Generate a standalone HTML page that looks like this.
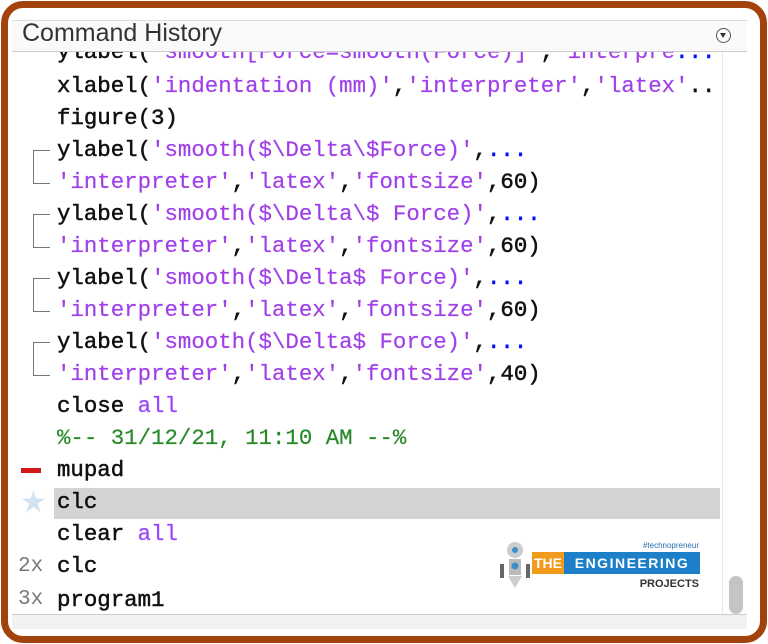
<!DOCTYPE html><html><head><style>
body{margin:0;width:768px;height:644px;background:#fff;overflow:hidden;font-family:"Liberation Sans",sans-serif}
.frame{position:absolute;left:1px;top:1px;width:752px;height:628px;border:7px solid #a2420c;border-radius:22px;background:#fff}
.hdr{position:absolute;left:12px;top:20px;width:735px;height:30px;border-top:1px solid #ddd;background:#fafafa;border-bottom:1px solid #ccc}
.hdr span{position:absolute;left:10px;top:-2px;font-size:25px;color:#333}
.dd{position:absolute;right:16px;top:7px;width:15px;height:15px;border:1.5px solid #555;border-radius:50%;box-sizing:border-box}
.dd:after{content:"";position:absolute;left:3px;top:4px;border-left:3.5px solid transparent;border-right:3.5px solid transparent;border-top:5px solid #333}
.l{position:absolute;left:57px;font-family:"Liberation Mono",monospace;font-size:22.4px;line-height:32px;height:32px;white-space:pre;color:#111;-webkit-text-stroke:0.5px #111}
.s{color:#a040e8;-webkit-text-stroke:0.2px #a040e8}.k{color:#9a40ff;-webkit-text-stroke:0.2px #9a40ff}.e{color:#0010ff;-webkit-text-stroke:0.5px #0010ff}.c{color:#2a8a2a;-webkit-text-stroke:0.2px #2a8a2a}
.br{position:absolute;left:33px;width:16px;height:32px;border:1.5px solid #777;border-right:none}
.cnt{position:absolute;left:18px;font-family:"Liberation Mono",monospace;font-size:21px;color:#777;line-height:32px}
.sel{position:absolute;left:54px;top:488px;width:666px;height:31px;background:#d3d3d3}
.sb{position:absolute;left:729px;top:576px;width:14px;height:38px;background:#c4c4c4;border-radius:7px}
.st{position:absolute;left:12px;top:614px;width:735px;height:14px;background:#f2f2f4;border-top:1px solid #ccc}
.vl{position:absolute;left:722px;top:51px;width:1px;height:563px;background:#e6e6e6}
</style></head><body>
<div class="frame"></div>
<div class="vl"></div>
<div class="sel"></div>
<div style="position:absolute;left:12px;top:51px;width:710px;height:563px;overflow:hidden">
<div class="l" style="left:45px;top:-15px">ylabel(<span class="s">'smooth[Force=smooth(Force)]'</span>,<span class="s">'interpre</span><span class="e">...</span></div>
</div>
<div class="hdr"><span>Command History</span><div class="dd"></div></div>
<div class="l" style="top:70px">xlabel(<span class="s">'indentation (mm)'</span>,<span class="s">'interpreter'</span>,<span class="s">'latex'</span>..</div>
<div class="l" style="top:102px">figure(3)</div>
<div class="br" style="top:150px"></div>
<div class="l" style="top:134px">ylabel(<span class="s">'smooth($\Delta\$Force)'</span>,<span class="e">...</span></div>
<div class="l" style="top:166px"><span class="s">'interpreter'</span>,<span class="s">'latex'</span>,<span class="s">'fontsize'</span>,60)</div>
<div class="br" style="top:214px"></div>
<div class="l" style="top:198px">ylabel(<span class="s">'smooth($\Delta\$ Force)'</span>,<span class="e">...</span></div>
<div class="l" style="top:230px"><span class="s">'interpreter'</span>,<span class="s">'latex'</span>,<span class="s">'fontsize'</span>,60)</div>
<div class="br" style="top:278px"></div>
<div class="l" style="top:262px">ylabel(<span class="s">'smooth($\Delta$ Force)'</span>,<span class="e">...</span></div>
<div class="l" style="top:294px"><span class="s">'interpreter'</span>,<span class="s">'latex'</span>,<span class="s">'fontsize'</span>,60)</div>
<div class="br" style="top:342px"></div>
<div class="l" style="top:326px">ylabel(<span class="s">'smooth($\Delta$ Force)'</span>,<span class="e">...</span></div>
<div class="l" style="top:358px"><span class="s">'interpreter'</span>,<span class="s">'latex'</span>,<span class="s">'fontsize'</span>,40)</div>
<div class="l" style="top:390px">close <span class="k">all</span></div>
<div class="l" style="top:422px"><span class="c">%-- 31/12/21, 11:10 AM --%</span></div>
<div style="position:absolute;left:21px;top:468px;width:20px;height:5px;background:#d01818"></div>
<div class="l" style="top:454px">mupad</div>
<div style="position:absolute;left:20px;top:486px;font-size:30px;color:#cfe3f2;line-height:34px">★</div>
<div class="l" style="top:486px">clc</div>
<div class="l" style="top:518px">clear <span class="k">all</span></div>
<div class="cnt" style="top:551px">2x</div>
<div class="l" style="top:550px">clc</div>
<div class="cnt" style="top:584px">3x</div>
<div class="l" style="top:584px">program1</div>
<svg style="position:absolute;left:496px;top:536px" width="210" height="60">
<g fill="#666"><circle cx="19" cy="14" r="8" fill="#ccc"/><circle cx="19" cy="14" r="3" fill="#3a8ed0"/><rect x="13" y="23" width="12" height="16" fill="#bbb"/><circle cx="19" cy="30" r="3.5" fill="#3a8ed0"/><rect x="4" y="28" width="4" height="14"/><rect x="30" y="28" width="4" height="14"/><path d="M12 40 L19 52 L26 40Z" fill="#ccc"/></g>
<text x="203" y="12" font-size="8" fill="#2a6fb0" text-anchor="end" font-family="Liberation Sans">#technopreneur</text>
<rect x="36" y="16" width="32" height="22" fill="#f29a1c"/><rect x="68" y="16" width="136" height="22" fill="#1d7fc8"/>
<text x="52" y="32" font-size="14" font-weight="bold" fill="#fff" text-anchor="middle" font-family="Liberation Sans">THE</text>
<text x="136" y="32" font-size="14" font-weight="bold" fill="#fff" text-anchor="middle" letter-spacing="1.5" font-family="Liberation Sans">ENGINEERING</text>
<text x="203" y="51" font-size="11" font-weight="bold" fill="#333" text-anchor="end" font-family="Liberation Sans">PROJECTS</text>
</svg>
<div class="sb"></div>
<div class="st"></div>
</body></html>
